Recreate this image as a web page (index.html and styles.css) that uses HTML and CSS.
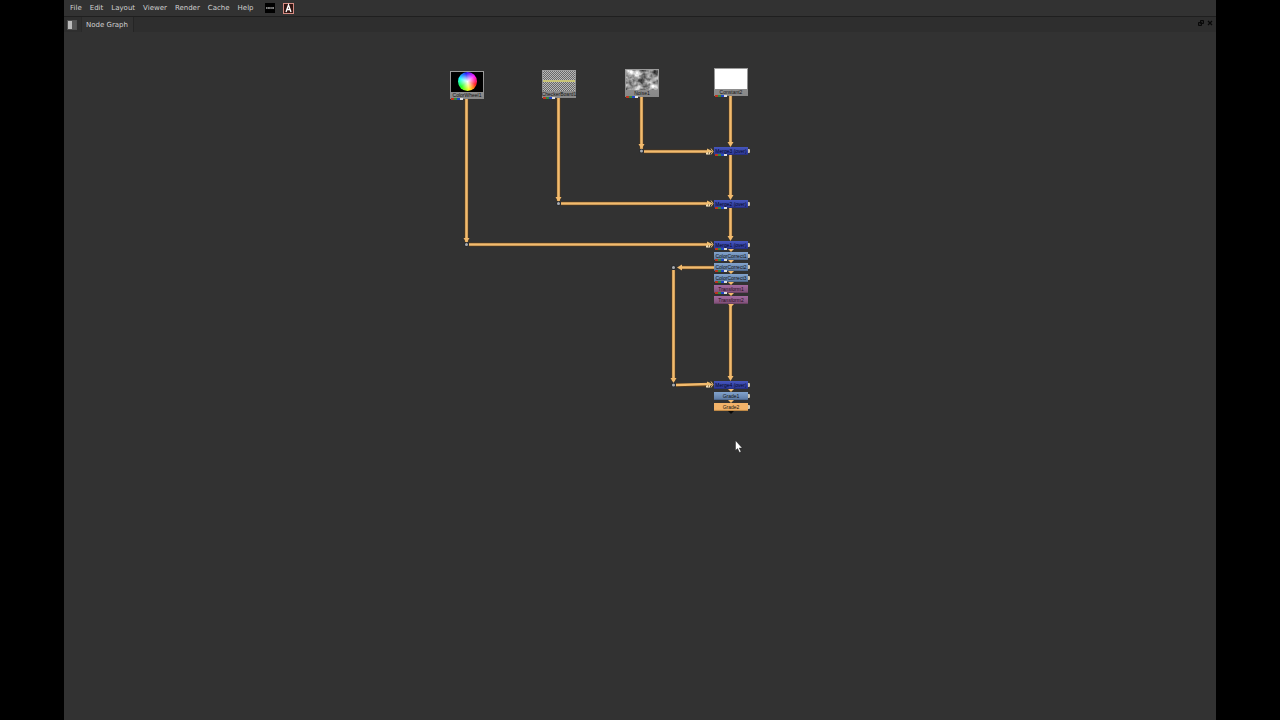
FILE: index.html
```html
<!DOCTYPE html>
<html lang="en">
<head>
<meta charset="utf-8">
<title>Node Graph</title>
<link rel="stylesheet" href="styles.css">
</head>
<body>
<div class="app">
  <nav class="menubar" aria-label="Main menu">
    <button class="menu">File</button>
    <button class="menu">Edit</button>
    <button class="menu">Layout</button>
    <button class="menu">Viewer</button>
    <button class="menu">Render</button>
    <button class="menu">Cache</button>
    <button class="menu">Help</button>
    <button class="tool" aria-label="Plugin tools">
      <svg width="10" height="10" viewBox="0 0 10 10"><path fill="#000" d="M0 0h10v10H0z"/><path stroke="#aaa" stroke-width="1.6" stroke-dasharray="1.5 .4 2 .4" d="M1 5h8"/></svg>
    </button>
    <button class="tool" aria-label="A tools">
      <svg width="11" height="11" viewBox="0 0 11 11"><rect x=".5" y=".5" width="10" height="10" fill="#301512" stroke="#d58b82"/><path fill="none" stroke="#fff" stroke-width="1.3" d="M3 9 5.500 2 8 9M4 6.500h3"/></svg>
    </button>
  </nav>
  <div class="tabbar">
    <button class="pane-menu" aria-label="Pane menu"></button>
    <button class="tab">Node Graph</button>
    <div class="pane-actions">
      <button class="tool" aria-label="Float pane"><svg width="6" height="6" viewBox="0 0 6 6"><path fill="#222" stroke="#080808" d="M2.500.500h3v3h-3zM.500 2.500h3v3h-3z"/></svg></button>
      <button class="tool" aria-label="Close pane"><svg width="6" height="6" viewBox="0 0 6 6"><path stroke="#080808" stroke-width="1.2" d="m1 1 4 4M5 1 1 5"/></svg></button>
    </div>
  </div>
  <main class="canvas">
    <svg class="wires" width="1" height="1" aria-hidden="true">
      <defs>
        <path id="down" d="M-3-4h6L0 1z"/>
        <g id="dot"><circle r="2.3" fill="#282a2d"/><circle r="1.5" fill="#a9adb3"/></g>
        <g id="join"><path fill="#efbd70" d="m-3-3 6 3-6 3z"/><path fill="none" stroke="#efbd70" d="m1-3 2 3-2 3"/><path fill="#f2dfb8" d="M-4 1h4v2h-4z"/><path fill="#594524" d="M-2 1h1v1h-1z"/></g>
      </defs>
      <g transform="translate(-64 -32)">
        <g fill="none" stroke="#51391d" stroke-width="4">
          <path d="M466.500 99V242M469 244.500H710M558.500 98V201M561 203.500H710M641.500 97V149M644 151.500H710M730.500 96V144M730.500 155V197M730.500 208V238M730.500 304V378M714 267.500H680M673.500 270V381M676 385H710"/>
        </g>
        <g fill="none" stroke="#f3bb6d" stroke-width="2.600">
          <path d="M466.500 99V242M469 244.500H710M558.500 98V201M561 203.500H710M641.500 97V149M644 151.500H710M730.500 96V144M730.500 155V197M730.500 208V238M730.500 304V378M714 267.500H680M673.500 270V381M676 385l34-1"/>
        </g>
        <g fill="#f3bb6d">
          <use href="#down" x="466.500" y="242"/><use href="#down" x="558.500" y="201"/><use href="#down" x="641.500" y="148"/>
          <use href="#down" x="730.500" y="146"/><use href="#down" x="730.500" y="199"/><use href="#down" x="730.500" y="240"/><use href="#down" x="730.500" y="380"/><use href="#down" x="673.500" y="382"/>
          <path d="M677 267.500l5-3v6z"/>
        </g>
        <use href="#dot" x="466.500" y="244.500"/><use href="#dot" x="558.500" y="203.500"/><use href="#dot" x="641.500" y="151"/><use href="#dot" x="673.500" y="267.500"/><use href="#dot" x="673.500" y="385"/>
        <use href="#join" x="710" y="151.500"/><use href="#join" x="710" y="203.500"/><use href="#join" x="710" y="244.500"/><use href="#join" x="710" y="384.500"/>
      </g>
    </svg>

    <div class="node source wheel-node"><div class="thumb"><div class="wheel"></div></div><span>ColorWheel1</span><i class="channels"></i></div>
    <div class="node source checker-node"><div class="thumb checks"></div><span>CheckerBoard1</span><i class="channels"></i></div>
    <div class="node source noise-node"><div class="thumb">
      <svg class="noise" width="32" height="20" aria-hidden="true"><filter id="cloud" x="0" y="0" width="1" height="1" color-interpolation-filters="sRGB"><feTurbulence type="fractalNoise" baseFrequency=".14" numOctaves="3" seed="8"/><feColorMatrix values="1.500 0 0 0 -.18 1.500 0 0 0 -.18 1.500 0 0 0 -.18 0 0 0 0 1"/></filter><rect width="32" height="20" filter="url(#cloud)"/></svg>
    </div><span>Noise1</span><i class="channels"></i></div>
    <div class="node source constant-node"><div class="thumb white"></div><span>Constant2</span><i class="channels"></i></div>

    <div class="node op merge merge-a"><span>Merge3 (over)</span><i class="channels"></i></div>
    <div class="node op merge merge-b"><span>Merge2 (over)</span><i class="channels"></i></div>
    <div class="stack stack-main">
      <div class="node op merge"><span>Merge1 (over)</span><i class="channels"></i></div>
      <div class="node op color"><span>ColorCorrect1</span><i class="channels"></i></div>
      <div class="node op color"><span>ColorCorrect2</span><i class="channels"></i></div>
      <div class="node op color"><span>ColorCorrect3</span><i class="channels"></i></div>
      <div class="node op transform"><span>Transform1</span><i class="channels"></i></div>
      <div class="node op transform"><span>Transform2</span></div>
    </div>
    <div class="stack stack-out">
      <div class="node op merge"><span>Merge4 (over)</span></div>
      <div class="node op color"><span>Grade1</span></div>
      <div class="node op selected"><span>Grade2</span></div>
    </div>
    <svg class="cursor" width="8" height="13" viewBox="0 0 8 13" aria-hidden="true"><path fill="#fff" stroke="#111" stroke-width=".4" d="M.5.500v10l2-2 2 4 1.500-.8-1.800-3.700h3z"/></svg>
  </main>
</div>
</body>
</html>
```

FILE: styles.css
```css
* { box-sizing: border-box; }

body {
  margin: 0;
  background: #000;
  color: #d0d0d0;
  font-family: "DejaVu Sans", Verdana, sans-serif;
  font-size: 7px;
}

button {
  margin: 0;
  padding: 0;
  border: 0;
  background: none;
  color: inherit;
  font: inherit;
}

svg { display: block; }

.app {
  display: flex;
  flex-direction: column;
  min-height: 100vh;
  margin: 0 5%;
  background: #323232;
}

.menubar {
  display: flex;
  align-items: center;
  gap: 8px;
  height: 16px;
  padding-left: 6px;
  background: #323232;
}

.tabbar {
  display: flex;
  align-items: center;
  height: 16px;
  border-top: 1px solid #1f1f1f;
  background: #2e2e2e;
}

.pane-menu {
  width: 10px;
  height: 10px;
  margin-left: 3px;
  border: 1px solid #505050;
  background: linear-gradient(90deg, #bcbcbc 45%, #555 55%);
}

.tab {
  height: 15px;
  margin-left: 4px;
  padding: 0 5px 0 4px;
  border-left: 1px solid #292929;
  border-right: 1px solid #252525;
  background: #323232;
}

.pane-actions {
  display: flex;
  gap: 3px;
  margin-left: auto;
  padding: 0 3px 3px 0;
}

.canvas {
  position: relative;
  flex: 1;
  background: #323232;
}

.wires {
  position: absolute;
  top: 0;
  left: 0;
  overflow: visible;
}

.menu:last-of-type { margin-right: 0; }
.menu + .tool { margin-left: 3px; }

.node {
  position: relative;
  width: 34px;
  color: #111;
  font-family: "Liberation Sans", Arial, sans-serif;
  font-size: 5px;
  line-height: 7px;
  text-align: center;
  white-space: nowrap;
}

.node span {
  display: flex;
  justify-content: center;
}

.source {
  position: absolute;
  padding: 1px 1px 0;
  background: linear-gradient(#9c9c9c, #888);
}

.wheel-node { top: 39px; left: 386px; }
.checker-node { top: 38px; left: 478px; }
.noise-node { top: 37px; left: 561px; }
.constant-node { top: 36px; left: 650px; }

.thumb {
  height: 20px;
  overflow: hidden;
  background: #000;
}

.wheel {
  width: 19px;
  height: 19px;
  margin: 0 auto;
  border-radius: 50%;
  background: radial-gradient(#fff, #fff0 60%), conic-gradient(from 70deg, #f22, #f2f, #22f, #2ff, #2f2, #ff2, #f22);
  transform: scaleY(-1);
}

.checks {
  background: linear-gradient(#0000 9px, #c8c477 9px, #c8c477 11px, #0000 11px), repeating-conic-gradient(#686868 0 25%, #b8b8b8 0 50%) 0 0 / 2px 2px;
}

.white { background: #fff; }

.op {
  height: 8px;
  padding: 1px 0;
  line-height: 6px;
}

.op::after {
  content: "";
  position: absolute;
  top: 2px;
  right: -2px;
  width: 2px;
  height: 4px;
  border-radius: 0 1px 1px 0;
  background: #d0c7b2;
}

.merge { background: linear-gradient(#4556bd, #303c9d 80%, #222b70); color: #050820; }
.color { background: linear-gradient(#82a3cc, #6482ab 80%, #465e80); }
.transform { background: linear-gradient(#a36ba0, #87557f 80%, #5f3b59); color: #210f20; }
.selected { background: linear-gradient(#f2b369 80%, #a77536); }
.transform::after { display: none; }

.merge-a,
.merge-b,
.stack { position: absolute; left: 650px; }

.merge-a { top: 115px; }
.merge-b { top: 168px; }
.stack-main { top: 209px; }
.stack-out { top: 349px; }

.stack {
  display: flex;
  flex-direction: column;
  gap: 3px;
}

.stack .node::before {
  content: "";
  position: absolute;
  z-index: 1;
  top: 8px;
  left: 14px;
  border: 3px solid transparent;
  border-top-color: #f3bb6d;
  border-bottom: 0;
}

.stack .selected::before { border-top-color: #080808; }

.channels {
  position: absolute;
  bottom: -1px;
  left: 1px;
  width: 12px;
  height: 2px;
  background: linear-gradient(90deg, #bd351f 3px, #35883b 3px 6px, #2147c4 6px 9px, #dedede 9px);
}

.cursor {
  position: absolute;
  top: 408px;
  left: 671px;
}
```
